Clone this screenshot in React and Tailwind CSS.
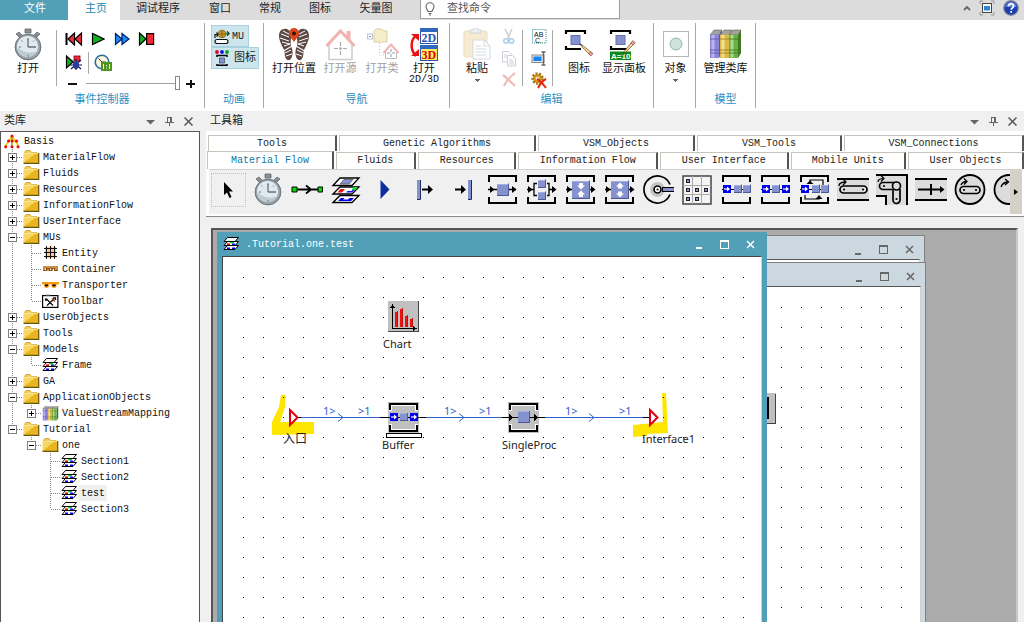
import React from 'react';

const BLUE = '#8492cf';

/* ---------- shared icon parts ---------- */

function Svg({ w = 32, h = 32, vb, crisp, children, className = '' }) {
  return (
    <svg
      width={w}
      height={h}
      viewBox={vb || `0 0 ${w} ${h}`}
      fill="none"
      shapeRendering={crisp ? 'crispEdges' : 'auto'}
      className={'block shrink-0 ' + className}
      aria-hidden="true"
    >
      {children}
    </svg>
  );
}

const Brackets = () => (
  <path d="M3 9V3H30V9M3 24V30H30V24" stroke="#000" strokeWidth="2" />
);
const Head = ({ x, y = 16.5 }) => <path d={`M${x} ${y - 3.5}l4.500 3.500l-4.500 3.500z`} fill="#000" />;
const Box = ({ x, y, s }) => (
  <>
    <rect x={x} y={y} width={s} height={s} fill={BLUE} />
    <path d={`M${x} ${y + s - 0.5}h${s - 0.5}v${-s}`} stroke="#4d5895" />
    <path d={`M${x} ${y + 0.5}h${s - 1}`} stroke="#a4b0e4" />
  </>
);
const ArrowBox = ({ x, y = 12 }) => (
  <>
    <rect x={x} y={y} width="8" height="8" fill="#0000f0" />
    <path d={`M${x + 1} ${y + 4}h4`} stroke="#fff" strokeWidth="1.200" shapeRendering="auto" />
    <path d={`M${x + 4} ${y + 1.5}l3 2.500l-3 2.500z`} fill="#fff" shapeRendering="auto" />
  </>
);

function Stopwatch() {
  return (
    <Svg w={30} h={33} vb="0 0 30 33">
      <path d="M12 1h6v4h-6zM3 6l3-2l3 3l-3 2zM27 6l-3-2l-3 3l3 2z" fill="#8a9298" stroke="#555d63" strokeWidth=".7" />
      <circle cx="15" cy="19" r="13.2" fill="#9aa4aa" />
      <circle cx="15" cy="19" r="12.8" stroke="#6a747b" strokeWidth="1" />
      <circle cx="14.6" cy="18.6" r="10.6" fill="#dfe9ef" />
      <path d="M4.500 19a10.300 10.300 0 0 0 19.500 4C18 26 10 25 4.500 19z" fill="#bccad3" />
      <path d="M15 19h8M15 19v-8" stroke="#64727c" strokeWidth="1.3" />
      <path d="M15 10v2M15 27v2M6 19h2M8.500 12.500l1 1M21 12.500l-1 1" stroke="#687680" />
    </Svg>
  );
}

function FrameBig() {
  return (
    <Svg w={32} h={32} vb="0 0 32 32">
      <path d="M3 28.500L10 21.500H29L22 28.500z" fill="#fff" stroke="#000" strokeWidth="1.300" />
      <path d="M8 27l3-3h3.500l-1.500 1.500h5l1.500-1.500h4.500l-3 3z" fill="#0000f0" />
      <path d="M3 20L10 13H29L22 20z" fill="#fff" stroke="#000" strokeWidth="1.300" />
      <path d="M7.500 18.500l3-3.500h4.500l-3 3.500z" fill="#f01010" />
      <path d="M16 18.500l1.500-1.500h4l2-2h2l-3.500 3.500z" fill="#1010f0" />
      <path d="M23 13h5l-3 3h-3z" fill="#00e020" />
      <path d="M3 11.500L10 4H29L22 11.500z" fill="#fff" stroke="#000" strokeWidth="1.300" />
      <path d="M10 10l4-4.500h9l-4 4.500z" fill={BLUE} stroke="#555" strokeWidth=".8" />
    </Svg>
  );
}

function FrameSmall() {
  return (
    <Svg w={17} h={14} vb="0 0 17 14">
      <path d="M1 12.500L4.500 8.500H15.500L12 12.500z" fill="#fff" stroke="#000" />
      <path d="M4 11.300h3M9 11.300h3" stroke="#0000ff" strokeWidth="1.600" />
      <path d="M1 8.500L4.500 4.500H15.500L12 8.500z" fill="#fff" stroke="#000" />
      <path d="M4 7.200h3" stroke="#f00" strokeWidth="1.600" />
      <path d="M7 5.600h4" stroke="#00d800" strokeWidth="1.400" />
      <path d="M9 7.200h3" stroke="#00f" strokeWidth="1.400" />
      <path d="M1 4.500L4.500 .5H15.500L12 4.500z" fill="#fff" stroke="#000" />
    </Svg>
  );
}

function Books({ w = 33, h = 30 }) {
  return (
    <Svg w={w} h={h} vb="0 0 33 30">
      {[
        [1, '#8d86d8', '#b9b4f3', '#5d55a8'],
        [11, '#d9b84c', '#f5e08c', '#a08122'],
        [20, '#6cae48', '#a6dc85', '#3f7a22'],
      ].map(([x, c, l, d]) => (
        <g key={x}>
          <path d={`M${x} 6l4-5h8l-3 5z`} fill="#a3a39b" stroke="#666" strokeWidth=".6" />
          <path d={`M${x + 9} 6l3-5v23l-3 5z`} fill={d} />
          <rect x={x} y="5.500" width="9" height="23.500" fill={c} />
          <rect x={x + 1.5} y="6" width="3" height="22.500" fill={l} />
          <path d={`M${x} 10h9M${x} 21h9M${x} 24h9`} stroke={d} strokeWidth=".9" />
        </g>
      ))}
    </Svg>
  );
}

/* ---------- ribbon icons ---------- */

const Rewind = () => (
  <Svg w={18} h={14} vb="0 0 18 14">
    <path d="M1.500 1v12" stroke="#000" strokeWidth="2" />
    <path d="M9.500 1v12L3 7zM16.500 1v12L10 7z" fill="#f03038" stroke="#000" strokeWidth="1.200" />
  </Svg>
);
const Play = () => (
  <Svg w={14} h={14} vb="0 0 14 14">
    <path d="M1.500 1.500v11L13 7z" fill="#10b020" stroke="#000" strokeWidth="1.200" />
  </Svg>
);
const Forward = () => (
  <Svg w={16} h={14} vb="0 0 16 14">
    <path d="M1.500 1.500v11L8 7zM8 1.500v11L15 7z" fill="#1f8df0" stroke="#001c70" strokeWidth="1.200" />
  </Svg>
);
const PlayStop = () => (
  <Svg w={17} h={14} vb="0 0 17 14">
    <path d="M1.500 1v12L8 7z" fill="#10b020" stroke="#000" strokeWidth="1.200" />
    <rect x="8.600" y="1.600" width="7" height="10.800" fill="#f02838" stroke="#000" strokeWidth="1.200" />
  </Svg>
);
const Debug = () => (
  <Svg w={18} h={16} vb="0 0 18 16">
    <rect x="9" y="1" width="6" height="5" fill="#f02838" stroke="#700" strokeWidth=".8" />
    <path d="M1.500 1v12L8 7z" fill="#10b020" stroke="#000" strokeWidth="1.200" />
    <path d="M6 5l10 9M16 5L6 14M5 10h12M11 4v11" stroke="#101050" strokeWidth="1.200" />
    <ellipse cx="11" cy="10" rx="3" ry="4" fill="#2b3a9c" />
  </Svg>
);
const Realtime = () => (
  <Svg w={18} h={18} vb="0 0 18 18">
    <circle cx="8" cy="8" r="6.800" fill="#fdf8dc" stroke="#2d6f9e" strokeWidth="1.600" />
    <path d="M8 8L4.500 4.500M8 8h4" stroke="#345" strokeWidth="1" />
    <rect x="7" y="8" width="11" height="9" fill="#4e961c" />
    <path d="M9.500 10v5M15.500 10v5M12.500 11v1M12.500 13.500v1" stroke="#fff" />
  </Svg>
);
const MuIcon = () => (
  <Svg w={16} h={15} vb="0 0 16 15">
    <rect x="1" y="10.500" width="13" height="4" rx="2" fill="#fff" stroke="#111" strokeWidth="1.200" />
    <path d="M1 9V5.500h3M2.500 3.500l2 2l-2 2M11 4.500h4M13 2.500l2 2l-2 2" stroke="#111" strokeWidth="1.200" />
    <circle cx="8" cy="5" r="3.800" fill="#c99a2a" stroke="#7d5d10" strokeWidth=".8" />
    <path d="M8 1.500v7M4.500 5h7" stroke="#7d5d10" strokeWidth=".8" />
    <path d="M12 5l2-1" stroke="#2a9a2a" strokeWidth="1.500" />
  </Svg>
);
const IconToggle = () => (
  <Svg w={16} h={16} vb="0 0 16 16">
    <circle cx="3" cy="2" r="1.900" fill="#f00020" />
    <circle cx="8" cy="2" r="1.900" fill="#1010f0" />
    <circle cx="13" cy="2" r="1.900" fill="#00a020" />
    <path d="M3 7V5.500h10V7M3 14v1.300h10V14" stroke="#000" strokeWidth="1.500" />
    <rect x="5.500" y="8" width="5" height="5" fill={BLUE} stroke="#445" strokeWidth=".7" />
  </Svg>
);
const Footprints = () => (
  <Svg w={32} h={33} vb="0 0 32 33">
    <path d="M6 1c5-1 7 3 7 8c0 4-1 6 0 9l-7 4C3 16 1 12 1 8c0-4 2-7 5-7z" fill="#5d4a45" />
    <path d="M6.500 23l7-4c2 5 1 12-2 13c-4 1-5-4-5-9z" fill="#5d4a45" />
    <path d="M26 1c-5-1-7 3-7 8c0 4 1 6 0 9l7 4c3-6 5-10 5-14c0-4-2-7-5-7z" fill="#5d4a45" />
    <path d="M25.500 23l-7-4c-2 5-1 12 2 13c4 1 5-4 5-9z" fill="#5d4a45" />
    <path
      d="M3 6l8 3M2 10l9 3M4 14l8 2M6 18l6-2M5 3l6 3M29 6l-8 3M30 10l-9 3M28 14l-8 2M26 18l-6-2M27 3l-6 3M7 25l6-3M8 28l6-2M25 25l-6-3M24 28l-6-2"
      stroke="#fff"
      strokeWidth="1"
    />
    <path d="M16 14c-3-4-5-6-5-9a5 5 0 0 1 10 0c0 3-2 5-5 9z" fill="#d8471e" />
    <circle cx="16" cy="5.500" r="2" fill="#3a1208" />
  </Svg>
);
const House = () => (
  <Svg w={31} h={33} vb="0 0 31 33">
    <path d="M4 16v15.500h23V16" stroke="#ccc" strokeWidth="1.500" />
    <path d="M23.500 3v8" stroke="#f3b3b3" strokeWidth="4" />
    <path d="M1.500 18L15.500 3L29.500 18" stroke="#f3b3b3" strokeWidth="3" />
    <path d="M15.500 14v4M15.500 23v4M9 20.500h4M18 20.500h4" stroke="#aaa" strokeWidth="1.200" />
    <rect x="14.500" y="19.500" width="2" height="2" fill="#888" />
  </Svg>
);
const ClassHouse = () => (
  <Svg w={33} h={33} vb="0 0 33 33">
    <path d="M8 3l2-2h6l2 2h3v11H8z" fill="#f4eecb" stroke="#d8cfa4" />
    <rect x="1.500" y="6" width="5" height="5" fill="#fff" stroke="#b9c6da" />
    <path d="M3 8.500h2" stroke="#7d8fb0" />
    <path d="M13.500 15v12h4" stroke="#bbb" strokeDasharray="1 2" />
    <path d="M19.500 23v7.500h11V23" stroke="#bbb" />
    <path d="M17.500 25L25 16.500L32.500 25" stroke="#f3b3b3" strokeWidth="2" />
    <path d="M25 21v3M25 26v3M21 25h3M26 25h3" stroke="#999" />
  </Svg>
);
const Switch2d3d = () => (
  <Svg w={30} h={33} vb="0 0 30 33">
    <path d="M8 7C1 11 1 22 7 28" stroke="#f01010" strokeWidth="2.500" />
    <path d="M2 6h8v7zM2 28h8v-7z" fill="#f01010" />
    <rect x="11.500" y=".5" width="17" height="15" fill="#fff" stroke="#2c56a8" />
    <rect x="11" y="0" width="18" height="4" fill="#2f66c0" />
    <rect x="11.500" y="17.500" width="17" height="15" fill="#f8ee60" stroke="#2c56a8" />
    <rect x="11" y="17" width="18" height="4" fill="#2f66c0" />
    <text x="12.500" y="14" fontFamily="Liberation Serif, serif" fontSize="12" fontWeight="700" fill="#2456b8">2D</text>
    <text x="12.500" y="31" fontFamily="Liberation Serif, serif" fontSize="12" fontWeight="700" fill="#e00000">3D</text>
  </Svg>
);
const Paste = () => (
  <Svg w={28} h={32} vb="0 0 28 32" className="opacity-50">
    <rect x="1" y="3" width="23" height="26" rx="2" fill="#efd9a4" stroke="#d9bd80" />
    <path d="M7 5h11V2h-3a2.500 2.500 0 0 0-5 0H7z" fill="#dfe3e6" stroke="#a4abb2" />
    <path d="M10 12h11l6 6v13H10z" fill="#fff" stroke="#a8b4c4" />
    <path d="M21 12v6h6M12.500 18h6M12.500 21h11M12.500 24h11M12.500 27h11" stroke="#a8b4c4" />
  </Svg>
);
const Cut = () => (
  <Svg w={12} h={17} vb="0 0 12 17" className="opacity-50">
    <path d="M2 1l5 10M9 1L4.500 11" stroke="#9aa5b0" strokeWidth="1.500" />
    <circle cx="3" cy="13" r="2.200" stroke="#55a4dd" strokeWidth="1.600" />
    <circle cx="8.500" cy="13" r="2.200" stroke="#55a4dd" strokeWidth="1.600" />
  </Svg>
);
const Copy = () => (
  <Svg w={16} h={17} vb="0 0 16 17" className="opacity-50">
    <path d="M1.500 1.500h6l2.500 2.500v8H1.500z" fill="#fff" stroke="#9aa5b5" />
    <path d="M6.500 5.500h5l3 3v7.500h-8z" fill="#fff" stroke="#9aa5b5" />
    <path d="M3 5h3M3 7h3M8 10h4M8 12h5M8 14h5" stroke="#9aa5b5" />
  </Svg>
);
const Del = () => (
  <Svg w={16} h={16} vb="0 0 16 16" className="opacity-40">
    <path d="M2 3c4 3 8 7 12 11M14 1C9 5 5 9 3 14" stroke="#dd5a4e" strokeWidth="2.200" />
  </Svg>
);
const Rename = () => (
  <Svg w={15} h={15} vb="0 0 15 15">
    <rect x=".5" y=".5" width="13.500" height="13.500" stroke="#2a8a9a" strokeDasharray="1 1" />
    <text x="2" y="7.500" fontFamily="Liberation Sans, sans-serif" fontSize="7" fill="#111">AB</text>
    <text x="3" y="13.500" fontFamily="Liberation Sans, sans-serif" fontSize="7" fill="#111">C.</text>
  </Svg>
);
const Field = () => (
  <Svg w={17} h={15} vb="0 0 17 15">
    <rect x="1" y="4" width="12" height="7.500" fill="#e8e8e8" stroke="#888" />
    <rect x="2.500" y="5.500" width="8" height="4.500" fill="#1684f8" />
    <path d="M10.500 1h4M10.500 14h4M12.500 1v13" stroke="#666" strokeWidth="1.300" />
  </Svg>
);
const GearX = () => (
  <Svg w={17} h={17} vb="0 0 17 17">
    <circle cx="6.500" cy="6.500" r="5" stroke="#a8780c" strokeWidth="2.500" strokeDasharray="2 1.500" />
    <circle cx="6.500" cy="6.500" r="4" fill="#d8a528" stroke="#a8780c" />
    <circle cx="6.500" cy="6.500" r="1.500" fill="#fff" />
    <path d="M6 7c4 2 6 5 9 9M15 7c-4 2-6 5-8 9" stroke="#e02a10" strokeWidth="2" />
  </Svg>
);
const Pencil = ({ d }) => (
  <g transform={d}>
    <path d="M0 0L3 1L4 4L16 16L19 13L4 1z" fill="#f5d391" stroke="#5d4526" strokeWidth=".9" />
    <path d="M0 0l3 .8l.8 2z" fill="#222" />
    <path d="M14 14l3-3l3 3l-3 3z" fill="#f4a0a0" stroke="#6d3526" strokeWidth=".8" />
  </g>
);
const IconEdit = () => (
  <Svg w={30} h={30} vb="0 0 30 30">
    <path d="M2 5V2H21V5M2 17V20H17" stroke="#000" strokeWidth="2.200" />
    <rect x="7" y="6.500" width="9" height="9" fill={BLUE} stroke="#6472b4" />
    <Pencil d="translate(15 15) scale(.7)" />
  </Svg>
);
const PanelEdit = () => (
  <Svg w={30} h={31} vb="0 0 30 31">
    <path d="M2 5V2H21V5M2 17V20H19" stroke="#000" strokeWidth="2.200" />
    <rect x="7" y="6.500" width="9" height="9" fill={BLUE} stroke="#6472b4" />
    <rect x="1" y="22.500" width="21" height="8.500" fill="#0b8a1a" />
    <text x="2" y="30" fontFamily="Liberation Sans, sans-serif" fontSize="8" fontWeight="700" fill="#fff">A=10</text>
    <Pencil d="translate(14 26) rotate(-90) scale(.72)" />
  </Svg>
);
const ObjectIcon = () => (
  <Svg w={26} h={26} vb="0 0 26 26">
    <rect x=".5" y=".5" width="25" height="25" fill="#fff" stroke="#b6b6b6" />
    <circle cx="13" cy="13" r="6" fill="#cfe3da" stroke="#8fb5a6" />
  </Svg>
);

/* ---------- ribbon ---------- */

function Tool({ icon, label, sub, className = '', disabled, drop }) {
  return (
    <button
      type="button"
      disabled={disabled}
      className={
        'flex flex-col items-center gap-[3px] pt-[5px] whitespace-nowrap ' +
        (disabled ? 'text-[#a0a0a0] ' : 'text-[#111] ') +
        className
      }
    >
      <span className="flex h-8 items-center">{icon}</span>
      <span className="text-[11px] leading-3">{label}</span>
      {sub && <span className="-mt-1 text-[10px] leading-3">{sub}</span>}
      {drop && (
        <Svg w={5} h={5} vb="0 0 5 5" crisp>
          <path d="M0 1h5L2.500 4z" fill={disabled ? '#a8a8a8' : '#666'} />
        </Svg>
      )}
    </button>
  );
}

function Group({ label, className = '', children }) {
  return (
    <section className={'my-[3px] flex shrink-0 flex-col border-r border-[#a8a8a8] ' + className}>
      <div className="flex min-h-0 flex-1">{children}</div>
      <h2 className="h-4 text-center text-[11px] leading-4 text-[#2a8fc4]">{label}</h2>
    </section>
  );
}

const Rule = () => <div className="mt-[7px] h-14 w-px bg-[#a8a8a8]" />;

function SmallBtn({ label, children, className = '' }) {
  return (
    <button type="button" aria-label={label} className={'flex items-center justify-center ' + className}>
      {children}
    </button>
  );
}

function Ribbon() {
  return (
    <div className="flex h-[91px] shrink-0 overflow-hidden bg-white">
      <Group label="事件控制器" className="w-[205px]">
        <Tool icon={<Stopwatch />} label="打开" className="w-14" />
        <Rule />
        <div className="flex flex-1 flex-col pl-[5px]">
          <div className="flex h-8 items-center pt-0.5">
            <SmallBtn label="复位" className="w-6"><Rewind /></SmallBtn>
            <SmallBtn label="启动" className="w-6"><Play /></SmallBtn>
            <SmallBtn label="快进" className="w-6"><Forward /></SmallBtn>
            <SmallBtn label="单步" className="w-6"><PlayStop /></SmallBtn>
          </div>
          <div className="flex h-[22px] items-center">
            <SmallBtn label="调试" className="w-6"><Debug /></SmallBtn>
            <div className="ml-0.5 h-[22px] w-px bg-[#a8a8a8]" />
            <SmallBtn label="实时" className="w-7"><Realtime /></SmallBtn>
          </div>
          <div className="flex h-5 items-center gap-1">
            <SmallBtn label="减速" className="w-5">
              <Svg w={9} h={9} crisp><path d="M0 5h9" stroke="#111" strokeWidth="2" /></Svg>
            </SmallBtn>
            <input
              type="range"
              aria-label="速度"
              defaultValue="100"
              className="h-4 w-[94px] appearance-none bg-transparent [&::-webkit-slider-runnable-track]:h-px [&::-webkit-slider-runnable-track]:bg-[#a0a0a0] [&::-webkit-slider-thumb]:-mt-[7px] [&::-webkit-slider-thumb]:h-3.5 [&::-webkit-slider-thumb]:w-[5px] [&::-webkit-slider-thumb]:appearance-none [&::-webkit-slider-thumb]:border [&::-webkit-slider-thumb]:border-[#888] [&::-webkit-slider-thumb]:bg-white"
            />
            <SmallBtn label="加速" className="w-3">
              <Svg w={9} h={9} crisp><path d="M0 5h9M5 1v8" stroke="#111" strokeWidth="2" /></Svg>
            </SmallBtn>
          </div>
        </div>
      </Group>

      <Group label="动画" className="w-[59px]">
        <div className="flex flex-col items-start pt-0.5 pl-1.5">
          <button type="button" aria-pressed="true" className="flex h-[22px] w-[38px] items-center gap-0.5 border border-[#a9d2de] bg-[#cde5ec] pl-0.5 text-[10px]">
            <MuIcon />MU
          </button>
          <button type="button" aria-pressed="true" className="flex h-[22px] w-12 items-center gap-1 border border-[#a9d2de] bg-[#cde5ec] pl-0.5 text-[11px]">
            <IconToggle />图标
          </button>
        </div>
      </Group>

      <Group label="导航" className="w-[186px]">
        <div className="flex pl-[7px]">
          <Tool icon={<Footprints />} label="打开位置" className="w-[46px]" />
          <Tool icon={<House />} label="打开源" disabled className="w-[46px]" />
          <Tool icon={<ClassHouse />} label="打开类" disabled className="w-[38px]" />
          <Tool icon={<Switch2d3d />} label="打开" sub="2D/3D" className="w-[46px]" />
        </div>
      </Group>

      <Group label="编辑" className="w-[204px]">
        <Tool icon={<Paste />} label="粘贴" drop className="ml-1 w-[46px]" />
        <div className="flex w-[22px] flex-col items-center pt-0.5">
          <SmallBtn label="剪切" className="h-[22px] pr-1"><Cut /></SmallBtn>
          <SmallBtn label="复制" className="h-[22px] pr-1"><Copy /></SmallBtn>
          <SmallBtn label="删除" className="h-[22px] pr-1"><Del /></SmallBtn>
        </div>
        <Rule />
        <div className="flex w-[29px] flex-col items-center pl-1 pt-0.5">
          <SmallBtn label="重命名" className="h-[22px]"><Rename /></SmallBtn>
          <SmallBtn label="编辑名称" className="h-[22px]"><Field /></SmallBtn>
          <SmallBtn label="清除设置" className="h-[22px]"><GearX /></SmallBtn>
        </div>
        <Rule />
        <Tool icon={<IconEdit />} label="图标" className="ml-[3px] w-[46px]" />
        <Tool icon={<PanelEdit />} label="显示面板" className="w-11" />
      </Group>

      <Group label="" className="w-[42px]">
        <Tool icon={<ObjectIcon />} label="对象" drop className="flex-1 pl-0.5" />
      </Group>

      <Group label="模型" className="w-[60px]">
        <Tool icon={<Books />} label="管理类库" className="flex-1" />
      </Group>
    </div>
  );
}

function MenuBar() {
  return (
    <header className="flex h-5 shrink-0 items-stretch bg-[#dcdcdc] text-[11px] leading-4">
      <nav className="flex shrink-0 text-[#222]">
        <button type="button" className="w-[68px] bg-[#529fb8] pb-0.5 pl-0.5 text-white">文件</button>
        <button type="button" className="w-[52px] bg-white pb-0.5 pl-1 text-[#1a86ac]">主页</button>
        <button type="button" className="w-[76px] pb-0.5">调试程序</button>
        <button type="button" className="w-12 pb-0.5">窗口</button>
        <button type="button" className="w-[52px] pb-0.5">常规</button>
        <button type="button" className="w-12 pb-0.5">图标</button>
        <button type="button" className="w-16 pb-0.5">矢量图</button>
      </nav>
      <label className="ml-3 flex h-[19px] w-[200px] shrink-0 items-center gap-3 border border-t-0 border-[#a0a0a0] bg-white pl-1">
        <Svg w={10} h={14} vb="0 0 10 14">
          <path d="M3 9.500C3 8 1 7 1 4.700a4 4 0 0 1 8 0C9 7 7 8 7 9.500zM3.500 11.500h3M4 13h2" stroke="#666" strokeWidth="1.100" />
        </Svg>
        <input aria-label="查找命令" placeholder="查找命令" className="w-full bg-transparent outline-none placeholder:text-[#555]" />
      </label>
      <div className="ml-auto flex items-center gap-2 pr-[5px] pb-1">
        <SmallBtn label="收起功能区">
          <Svg w={8} h={6}><path d="M1 5l3-3l3 3" stroke="#666" strokeWidth="1.800" /></Svg>
        </SmallBtn>
        <SmallBtn label="窗口布局">
          <Svg w={16} h={16}>
            <path d="M1 4V1h3M12 1h3v3M15 12v3h-3M4 15H1v-3" stroke="#999" />
            <rect x="3.500" y="3.500" width="9" height="9" fill="#fff" stroke="#444" />
            <rect x="5" y="6" width="6" height="4.500" fill="#2a86dc" />
          </Svg>
        </SmallBtn>
        <SmallBtn label="帮助">
          <Svg w={16} h={16}>
            <circle cx="8" cy="8" r="7.300" fill="#1c3fae" stroke="#8c8c98" strokeWidth="1.200" />
            <path d="M2.500 7a5.500 5 0 0 1 11 0z" fill="#5d84e0" />
            <path d="M5.700 6.200c0-3 4.800-3 4.800 0c0 1.800-2.300 1.800-2.300 3.500M8.200 11v1.700" stroke="#fff" strokeWidth="1.700" />
          </Svg>
        </SmallBtn>
      </div>
    </header>
  );
}

/* ---------- docked panels ---------- */

function PanelHeader({ title }) {
  return (
    <div className="flex h-5 shrink-0 items-center bg-[#f0f0f0] pl-1 pr-[7px] text-[11px] leading-4 text-[#222]">
      <h2 className="flex-1">{title}</h2>
      <div className="flex items-center gap-2.5">
        <SmallBtn label="菜单"><Svg w={9} h={10}><path d="M0 4h9L4.500 8.500z" fill="#666" /></Svg></SmallBtn>
        <SmallBtn label="固定">
          <Svg w={9} h={10} crisp><path d="M2.500 1v5M2 1.500h5M5.500 1v5M6.500 1v5M0 6.500h9M4.500 7v3" stroke="#666" /></Svg>
        </SmallBtn>
        <SmallBtn label="关闭"><Svg w={9} h={10}><path d="M.5 1.500l8 8M8.500 1.500l-8 8" stroke="#555" strokeWidth="1.500" /></Svg></SmallBtn>
      </div>
    </div>
  );
}

const Folder = () => (
  <Svg w={17} h={14} vb="0 0 17 14">
    <path d="M1 3h1V1.500L3 .5h4l1.500 2H14V4z" fill="#f2cf58" stroke="#c59a1a" strokeWidth=".8" />
    <rect x=".7" y="3" width="14.600" height="10" fill="#f6d660" />
    <path d="M.7 13L13 3h2.300v10z" fill="#e8b420" />
    <path d="M.7 13V3.200h14.600" stroke="#fbe9a0" />
    <path d="M.5 13.300h15.200V3" stroke="#6d5310" strokeWidth="1.200" />
  </Svg>
);
const Entity = () => (
  <Svg w={17} h={14} vb="0 0 17 14" crisp>
    <rect x="3" y="1" width="11" height="11" fill="#f6c9a0" />
    <path d="M4.500 0v13M8.500 0v13M12.500 0v13M2 2.500h13M2 6.500h13M2 10.500h13" stroke="#111" />
  </Svg>
);
const Container = () => (
  <Svg w={17} h={14} vb="0 0 17 14" crisp>
    <path d="M1 4h15v5h-3V7h-2v2H9V7H7v2H5V7H3v2H1z" fill="#c8904a" />
    <path d="M1 8.500h3M4.500 9V6.500h3V9M7 8.500h3M9.500 9V6.500h3V9M13 8.500h3" stroke="#8d5620" />
  </Svg>
);
const Transporter = () => (
  <Svg w={17} h={14} vb="0 0 17 14">
    <path d="M0 4h17v2.500H0z" fill="#f89a10" />
    <circle cx="4.500" cy="7.500" r="2.500" fill="#f89a10" /><circle cx="12" cy="7.500" r="2.500" fill="#f89a10" />
    <path d="M3 7a1.600 1.600 0 0 0 3 0zM10.500 7a1.600 1.600 0 0 0 3 0z" fill="#000" stroke="#000" />
  </Svg>
);
const ToolbarIcon = () => (
  <Svg w={17} h={14} vb="0 0 17 14">
    <rect x=".6" y="1.600" width="15.300" height="11.800" fill="#fff" stroke="#000" strokeWidth="1.200" />
    <path d="M4 1h4" stroke="#999" />
    <path d="M4 4.500l7 7M3.500 4.500v1.500h2M12 5l-7 6.500M11 4h2.500v2" stroke="#111" strokeWidth="1.300" />
    <path d="M10 4.500l3 3" stroke="#8a4a20" strokeWidth="1.500" />
  </Svg>
);
const RootIcon = () => (
  <Svg w={16} h={15} vb="0 0 16 15">
    <path d="M8 2L1 13M8 2l7 11M8 2v11M8 7l6 1" stroke="#e0d000" strokeWidth="1.500" />
    <path d="M8 1.500v12" stroke="#888" strokeWidth=".8" />
    {[[8, 2], [4.5, 7], [8, 7], [12.5, 7], [1.7, 12.8], [8, 12.8], [14, 12.8]].map(([x, y]) => (
      <circle key={x + '-' + y} cx={x} cy={y} r="1.500" fill="#f00010" />
    ))}
  </Svg>
);

const TREE = [
  { g: 't', ex: '+', icon: 'folder', name: 'MaterialFlow' },
  { g: 't', ex: '+', icon: 'folder', name: 'Fluids' },
  { g: 't', ex: '+', icon: 'folder', name: 'Resources' },
  { g: 't', ex: '+', icon: 'folder', name: 'InformationFlow' },
  { g: 't', ex: '+', icon: 'folder', name: 'UserInterface' },
  { g: 't', ex: '-', icon: 'folder', name: 'MUs' },
  { g: '|t', icon: 'entity', name: 'Entity' },
  { g: '|t', icon: 'container', name: 'Container' },
  { g: '|t', icon: 'transporter', name: 'Transporter' },
  { g: '|l', icon: 'toolbar', name: 'Toolbar' },
  { g: 't', ex: '+', icon: 'folder', name: 'UserObjects' },
  { g: 't', ex: '+', icon: 'folder', name: 'Tools' },
  { g: 't', ex: '-', icon: 'folder', name: 'Models' },
  { g: '|l', icon: 'frame', name: 'Frame' },
  { g: 't', ex: '+', icon: 'folder', name: 'GA' },
  { g: 't', ex: '-', icon: 'folder', name: 'ApplicationObjects' },
  { g: '|l', ex: '+', icon: 'books', name: 'ValueStreamMapping' },
  { g: 'l', ex: '-', icon: 'folder', name: 'Tutorial' },
  { g: ' l', ex: '-', icon: 'folder', name: 'one' },
  { g: '  t', icon: 'frame', name: 'Section1' },
  { g: '  t', icon: 'frame', name: 'Section2' },
  { g: '  t', icon: 'frame', name: 'test', selected: true },
  { g: '  l', icon: 'frame', name: 'Section3' },
];

const TREE_ICONS = {
  folder: <Folder />,
  entity: <Entity />,
  container: <Container />,
  transporter: <Transporter />,
  toolbar: <ToolbarIcon />,
  frame: <FrameSmall />,
  books: <Books w={17} h={15} />,
};

function Guide({ kind, ex }) {
  return (
    <Svg w={19} h={16} crisp>
      {kind !== ' ' && <path d={kind === 'l' ? 'M9.500 0V8' : 'M9.500 0V16'} stroke="#888" strokeDasharray="1 1" />}
      {(kind === 't' || kind === 'l') && <path d="M10 8.500H19" stroke="#888" strokeDasharray="1 1" />}
      {ex && (
        <>
          <rect x="5.500" y="4.500" width="8" height="8" fill="#fff" stroke="#808080" />
          <path d={ex === '+' ? 'M7 8.500h5M9.500 6v5' : 'M7 8.500h5'} stroke="#000" />
        </>
      )}
    </Svg>
  );
}

function ClassLibrary() {
  return (
    <aside className="flex w-[200px] shrink-0 flex-col">
      <PanelHeader title="类库" />
      <div className="min-h-0 flex-1 overflow-hidden border border-b-0 border-[#555] bg-white text-[10px] leading-4 text-[#111]">
        <div className="flex h-[17px] items-center gap-1 pl-[3px] pt-px">
          <RootIcon />
          <span className="pt-0.5 leading-[14px]">Basis</span>
        </div>
        <ul role="tree" aria-label="类库">
          {TREE.map((n) => (
            <li key={n.name} role="treeitem" aria-selected={!!n.selected} className="flex h-4 items-center pl-0.5">
              {n.g.split('').map((k, i) => (
                <Guide key={i} kind={k} ex={i === n.g.length - 1 ? n.ex : null} />
              ))}
              <span className="pl-px">{TREE_ICONS[n.icon]}</span>
              <span className={'ml-px px-0.5 pt-0.5 leading-[14px] ' + (n.selected ? 'bg-[#f0f0f0]' : '')}>{n.name}</span>
            </li>
          ))}
        </ul>
      </div>
    </aside>
  );
}

/* ---------- toolbox ---------- */

const Proc = () => (
  <><Brackets /><path d="M2 16.500h28" stroke="#000" strokeWidth="1.500" /><Head x={4} /><Head x={26} /><Box x={11} y={11} s={12} /></>
);
const Parallel = () => (
  <>
    <Brackets /><path d="M2 16.500h7M9 10.500h15v12H9zM24 16.500h6" stroke="#000" strokeWidth="1.300" /><Head x={3} /><Head x={27} />
    <rect x="12" y="6" width="10" height="10" fill="#f0f0f0" /><rect x="12" y="18" width="10" height="10" fill="#f0f0f0" />
    <Box x={13} y={7} s={8} /><Box x={13} y={19} s={8} />
  </>
);
const Assemble = ({ out }) => (
  <>
    <Brackets /><path d="M2 16.500h28" stroke="#000" strokeWidth="1.500" /><Head x={3} /><Head x={27} /><Box x={8} y={8} s={18} />
    {out ? (
      <path d="M17 9.500l4 4h-2v2h-4v-2h-2zM17 24.500l4-4h-2v-2h-4v2h-2z" fill="#fff" />
    ) : (
      <path d="M15 10h4v2.500h2l-4 4l-4-4h2zM15 24h4v-2.500h2l-4-4l-4 4h2z" fill="#fff" />
    )}
  </>
);
const Belt = () => (
  <>
    <rect x="0" y="5" width="32" height="23" fill="#dcdcdc" />
    <path d="M0 6h32M0 27h32" stroke="#000" strokeWidth="2" />
    <rect x="3" y="13" width="27" height="7" rx="3.500" stroke="#000" strokeWidth="1.700" />
    <path d="M2 13c0-3 2-4 7-4M6 6l3 3l-3 3" stroke="#000" strokeWidth="1.300" />
    <circle cx="7" cy="16.500" r="1.100" fill="#000" /><circle cx="26" cy="16.500" r="1.100" fill="#000" />
  </>
);

const TOOLS = [
  ['Select', <path d="M11 9v13l3-2.500l2.500 5.500l2-1l-2.500-5.500h4z" fill="#000" />],
  ['EventController', null],
  ['Connector', <><path d="M3 16.500h27M15 12.500l5 4l-5 4" stroke="#000" strokeWidth="1.800" /><path d="M1 14h5v5H1zM27 14h4.500v5h-4.500z" fill="#00e000" stroke="#000" /></>],
  ['Frame', null],
  ['Interface', <path d="M11.500 7v19l9-9.500z" fill="#0c2d9c" />],
  ['Source', <><rect x="9" y="7" width="3.500" height="19" fill={BLUE} /><path d="M12.500 7v19.500H9" stroke="#222b60" /><path d="M14 16.500h8" stroke="#000" strokeWidth="2" /><path d="M20 12l5 4.500l-5 4.500z" fill="#000" /></>],
  ['Drain', <><rect x="21" y="7" width="3.500" height="19" fill={BLUE} /><path d="M24.500 7v19.500H21" stroke="#222b60" /><path d="M8 16.500h8" stroke="#000" strokeWidth="2" /><path d="M14 12l5 4.500l-5 4.500z" fill="#000" /></>],
  ['SingleProc', <Proc />],
  ['ParallelProc', <Parallel />],
  ['Assembly', <Assemble />],
  ['Dismantle', <Assemble out />],
  ['PickAndPlace', <>
    <path d="M28 11.500A13.500 13.500 0 1 0 28 21.500" stroke="#000" strokeWidth="1.700" />
    <circle cx="15.500" cy="16.500" r="6" stroke="#c4c4c4" strokeWidth="3" />
    <path d="M20 16.500h12" stroke="#000" strokeWidth="5" /><path d="M21 16.500h11" stroke={BLUE} strokeWidth="3" />
    <circle cx="15.500" cy="16.500" r="3.500" fill="#fff" stroke="#000" strokeWidth="1.700" /><circle cx="15.500" cy="16.500" r="1" fill="#000" />
  </>],
  ['Store', <>
    <rect x="2" y="3" width="28" height="28" fill="#f4f4f4" stroke="#444" strokeWidth="1.500" /><path d="M11.500 3v28M20.500 3v28M2 12.500h28M2 21.500h28" stroke="#aaa" />
    {[[6, 6], [6, 15], [15, 15], [24, 15], [6, 24], [15, 24]].map(([x, y]) => <rect key={x + '-' + y} x={x - 0.5} y={y + 0.5} width="3" height="3" fill={BLUE} stroke="#222" />)}
  </>],
  ['Buffer', <><Brackets /><path d="M2 16.500h28" stroke="#000" /><ArrowBox x={3} /><Box x={14} y={12} s={8} /><Box x={23} y={12} s={8} /></>],
  ['PlaceBuffer', <><Brackets /><path d="M2 16.500h28" stroke="#000" /><ArrowBox x={3} /><Box x={13} y={12} s={8} /><ArrowBox x={23} /></>],
  ['Sorter', <>
    <Brackets /><path d="M2 16.500h28M12 10V7h13v5M7 22v4h14v-3" stroke="#000" strokeWidth="1.200" /><path d="M8.500 11h7l-3.500-3.500zM17.500 26h7l-3.500-4z" fill="#000" />
    <ArrowBox x={3} /><Box x={14} y={12} s={8} /><Box x={23} y={12} s={8} />
  </>],
  ['Line', <Belt />],
  ['AngularConverter', <>
    <path d="M0 2h31v30H11V23H0z" fill="#dcdcdc" /><path d="M0 2h31v30M0 23h10v9" stroke="#000" strokeWidth="2" />
    <path d="M18 9.500H7a3.500 3.500 0 0 0 0 7h9M17 16v11a3.500 3.500 0 0 0 7 0V16" stroke="#000" strokeWidth="1.700" /><circle cx="20.500" cy="13" r="4" fill="#dcdcdc" stroke="#000" strokeWidth="1.700" />
    <path d="M2 9c0-3 2-3.500 6-3.500M5 2.500l3 3l-3 3" stroke="#000" strokeWidth="1.200" /><circle cx="8" cy="13" r="1.100" fill="#000" /><circle cx="20.500" cy="26" r="1.100" fill="#000" />
  </>],
  ['Track', <><rect x="0" y="5" width="32" height="23" fill="#dcdcdc" /><path d="M0 6h32M0 27h32M3 16.500h25M16 11v11" stroke="#000" strokeWidth="2" /><Head x={25} /></>],
  ['Turntable', <>
    <circle cx="16" cy="16.500" r="14.500" fill="#dcdcdc" stroke="#000" strokeWidth="1.800" /><rect x="6" y="13.500" width="20" height="7" rx="3.500" stroke="#000" strokeWidth="1.700" />
    <path d="M7 12c1-2.500 3-3.500 6-3.500M10 5.500l3 3l-3 3" stroke="#000" strokeWidth="1.300" /><circle cx="10" cy="17" r="1.100" fill="#000" /><circle cx="22" cy="17" r="1.100" fill="#000" />
  </>],
  ['Turnplate', <><circle cx="16" cy="16.500" r="14.500" fill="#dcdcdc" stroke="#000" strokeWidth="1.800" /><path d="M8 14c1-3 4-5 8-5M12 6l3.500 3l-3.500 3" stroke="#000" strokeWidth="1.300" /></>],
];

const tabBase = 'border-t border-l border-[#c8c4bc] border-r-2 border-r-[#555] bg-white text-center whitespace-nowrap ';

function Toolbox() {
  return (
    <section className="flex shrink-0 flex-col">
      <PanelHeader title="工具箱" />
      <div className="border-b border-[#888] bg-white pt-1 pl-px">
        <div role="tablist" className="flex flex-col text-[10px] leading-4 text-[#222]">
          <div className="flex h-4 gap-0.5 pl-px">
            <button role="tab" type="button" className={tabBase + 'flex-[128]'}>Tools</button>
            <button role="tab" type="button" className={tabBase + 'flex-[198]'}>Genetic Algorithms</button>
            <button role="tab" type="button" className={tabBase + 'flex-[156]'}>VSM_Objects</button>
            <button role="tab" type="button" className={tabBase + 'flex-[145]'}>VSM_Tools</button>
            <button role="tab" type="button" className={tabBase + 'flex-[180]'}>VSM_Connections</button>
          </div>
          <div className="flex h-[18px] items-end gap-0.5">
            <button role="tab" type="button" aria-selected="true" className={tabBase + 'h-[18px] flex-[127] text-[#10789c]'}>Material Flow</button>
            <button role="tab" type="button" className={tabBase + 'h-[17px] flex-[79]'}>Fluids</button>
            <button role="tab" type="button" className={tabBase + 'h-[17px] flex-[98]'}>Resources</button>
            <button role="tab" type="button" className={tabBase + 'h-[17px] flex-[140]'}>Information Flow</button>
            <button role="tab" type="button" className={tabBase + 'h-[17px] flex-[129]'}>User Interface</button>
            <button role="tab" type="button" className={tabBase + 'h-[17px] flex-[115]'}>Mobile Units</button>
            <button role="tab" type="button" className={tabBase + 'h-[17px] flex-[116]'}>User Objects</button>
          </div>
        </div>
        <div className="mx-0.5 mb-0.5 flex h-[45px] items-stretch border-t border-[#d4d0c8] bg-[#f0f0f0]">
          <div className="flex min-w-0 flex-1 items-center overflow-hidden pb-[5px]">
            {TOOLS.map(([name, art], i) => (
              <button
                key={name}
                type="button"
                aria-label={name}
                className={
                  'flex h-[34px] shrink-0 items-center justify-center ' +
                  (i === 0 ? 'mx-0.5 w-[35px] border border-dotted border-[#b4c4c4]' : 'w-[39px]')
                }
              >
                {name === 'EventController' ? <Stopwatch /> : name === 'Frame' ? <FrameBig /> : <Svg vb="0 0 32 34" h={34}>{art}</Svg>}
              </button>
            ))}
          </div>
          <button type="button" aria-label="更多" className="flex w-3 shrink-0 items-center justify-center bg-[#d4d0c8]">
            <Svg w={4} h={6}><path d="M0 0v6l4-3z" fill="#000" /></Svg>
          </button>
        </div>
      </div>
    </section>
  );
}

/* ---------- MDI desktop ---------- */

function WindowControls() {
  return (
    <div className="ml-auto flex items-center gap-[17px]">
      <SmallBtn label="最小化"><Svg w={9} h={10} crisp><path d="M2 9h6" stroke="currentColor" strokeWidth="2" /></Svg></SmallBtn>
      <SmallBtn label="最大化"><Svg w={9} h={9} crisp><path d="M.5 1h8v7.500h-8z" stroke="currentColor" /><path d="M0 1h9" stroke="currentColor" strokeWidth="2" /></Svg></SmallBtn>
      <SmallBtn label="关闭"><Svg w={9} h={9}><path d="M1 1l7 7M8 1l-7 7" stroke="currentColor" strokeWidth="1.500" /></Svg></SmallBtn>
    </div>
  );
}

function Dots({ id }) {
  return (
    <>
      <defs>
        <pattern id={id} width="20" height="20" patternUnits="userSpaceOnUse">
          <rect width="1" height="1" fill="#000" />
        </pattern>
      </defs>
      <rect x="10" y="10" width="2000" height="2000" fill={`url(#${id})`} />
    </>
  );
}

function BackWindow({ className, id, children }) {
  return (
    <div className={'absolute flex flex-col border border-[#808080] bg-[#cbd8e0] ' + className}>
      <div className="flex h-[23px] shrink-0 items-center pr-2.5 pt-1 text-[#666]"><WindowControls /></div>
      <div className="mx-1 min-h-0 flex-1 border-t border-l border-r border-[#555] border-r-[#d4d0c8] bg-white">
        <svg width="100%" height="100%" className="block" shapeRendering="crispEdges">
          <Dots id={id} />
          {children}
        </svg>
      </div>
    </div>
  );
}

const NodeTile = ({ x, y, children }) => (
  <g transform={`translate(${x} ${y})`}>
    <rect width="31" height="31" fill="#c0c0c0" />
    {children}
  </g>
);
const TileBrackets = () => (
  <>
    <path d="M3.500 8.500V3.500H27.500V8.500M3.500 22.500V27.500H27.500V22.500M1 8.500h3M27 8.500h3M1 22.500h3M27 22.500h3" stroke="#fff" />
    <path d="M2 8V2H29V8M2 23V29H29V23" stroke="#000" strokeWidth="2" />
  </>
);

function Link({ x1, x2, mid, a, b }) {
  return (
    <>
      <path d={`M${x1} 160.500H${x2}`} stroke="#2f62cc" />
      <path d={`M${mid} 156.500l5 4l-5 4`} stroke="#2f62cc" strokeWidth="1" shapeRendering="auto" />
      <text x={a} y="158" fill="#2f62cc">1&gt;</text>
      <text x={b} y="158" fill="#2f62cc">&gt;1</text>
    </>
  );
}

function Model() {
  return (
    <svg
      width="100%"
      height="100%"
      fill="none"
      shapeRendering="crispEdges"
      className="block font-['Noto_Sans','Noto_Sans_CJK_SC',sans-serif] text-[11px]"
    >
      <path d="M58 138h4v12l-5 15h34v12l-42 1v-13l7-15z" fill="#ffe600" shapeRendering="auto" />
      <path d="M439 136h4l2 40l-21 1v2l-14 1v-12l30-3z" fill="#ffe600" shapeRendering="auto" />
      <Dots id="dots-main" />
      <Link x1={75} x2={165} mid={115} a={100} b={135} />
      <Link x1={196} x2={285} mid={236} a={221} b={256} />
      <Link x1={316} x2={427} mid={366} a={342} b={396} />
      <path d="M157 160.500h9M197 160.500h6M279 160.500h7M316 160.500h6M74 160.500h4M420 160.500h6" stroke="#000" />
      <path d="M67 153v15l7.500-7.500z" fill="#fff" stroke="#e00010" strokeWidth="2" shapeRendering="auto" />
      <path d="M427 153v15l7.500-7.500z" fill="#fff" stroke="#e00010" strokeWidth="2" shapeRendering="auto" />

      <NodeTile x={165} y={44}>
        <path d="M30.500 0v30.500H0" stroke="#444" />
        <path d="M4.500 4v23.500h23" stroke="#000" />
        <path d="M2 7h5L4.500 3zM25 25v5l4-2.500z" fill="#000" />
        <path d="M7 11l3-1v16H7zM12 8l3-1v19h-3zM17 15l3-1v12h-3zM22 18l3-1v9h-3z" fill="#f01010" />
        <path d="M9.500 10v16M14.500 7v19M19.500 14v12M24.500 17v9" stroke="#c01010" />
      </NodeTile>
      <NodeTile x={165} y={145}>
        <TileBrackets />
        <path d="M0 15.500h31" stroke="#000" />
        <ArrowBox x={2} y={11} /><Box x={12} y={11} s={8} /><ArrowBox x={22} y={11} />
      </NodeTile>
      <rect x="163.500" y="176.500" width="35" height="4" fill="#fff" stroke="#000" />
      <NodeTile x={285} y={145}>
        <TileBrackets />
        <path d="M0 15.500h31" stroke="#000" /><Head x={1} y={15.5} /><Head x={26} y={15.5} /><Box x={10} y={9} s={12} />
      </NodeTile>

      <g fill="#222">
        <text x="160" y="91">Chart</text>
        <text x="60" y="186" fontSize="12">入口</text>
        <text x="159" y="192">Buffer</text>
        <text x="279" y="192">SingleProc</text>
        <text x="419" y="186">Interface1</text>
      </g>
    </svg>
  );
}

function Desktop() {
  return (
    <div className="flex min-h-0 flex-1 bg-[#f0f0f0] pt-[11px] pr-1.5 pl-[5px]">
      <div className="relative flex-1 overflow-hidden border-2 border-b-0 border-[#555] border-r-[#c8c8c8] bg-[#ababab]">
        <BackWindow id="dots-a" className="top-[5px] left-[16px] h-72 w-[696px]" />
        <BackWindow id="dots-b" className="top-[32px] -bottom-5 left-[22px] w-[691px]">
          <rect x="505" y="106" width="30" height="31" fill="#c0c0c0" />
          <path d="M504 136.500h30.500v-30" fill="none" stroke="#444" />
          <path d="M520 111h7v20h-7" fill="none" stroke="#000" strokeWidth="2" />
        </BackWindow>
        <article className="absolute top-0.5 -bottom-5 left-1 flex w-[550px] flex-col bg-[#529fb8]">
          <div className="flex h-6 shrink-0 items-center gap-1.5 pr-3 pl-1.5 text-white">
            <FrameSmall />
            <h3 className="pt-0.5 text-[10px] leading-4">.Tutorial.one.test</h3>
            <WindowControls />
          </div>
          <div className="mx-[5px] min-h-0 flex-1 border-t border-l border-r border-[#444] border-r-[#d4d0c8] bg-white">
            <Model />
          </div>
        </article>
      </div>
    </div>
  );
}

export default function App() {
  return (
    <div className="flex h-screen flex-col overflow-hidden bg-[#f0f0f0] font-['Liberation_Mono','Noto_Sans_CJK_SC',monospace] text-[#222]">
      <MenuBar />
      <Ribbon />
      <div className="flex min-h-0 flex-1 gap-1.5">
        <ClassLibrary />
        <main className="flex min-w-0 flex-1 flex-col">
          <Toolbox />
          <Desktop />
        </main>
      </div>
    </div>
  );
}
